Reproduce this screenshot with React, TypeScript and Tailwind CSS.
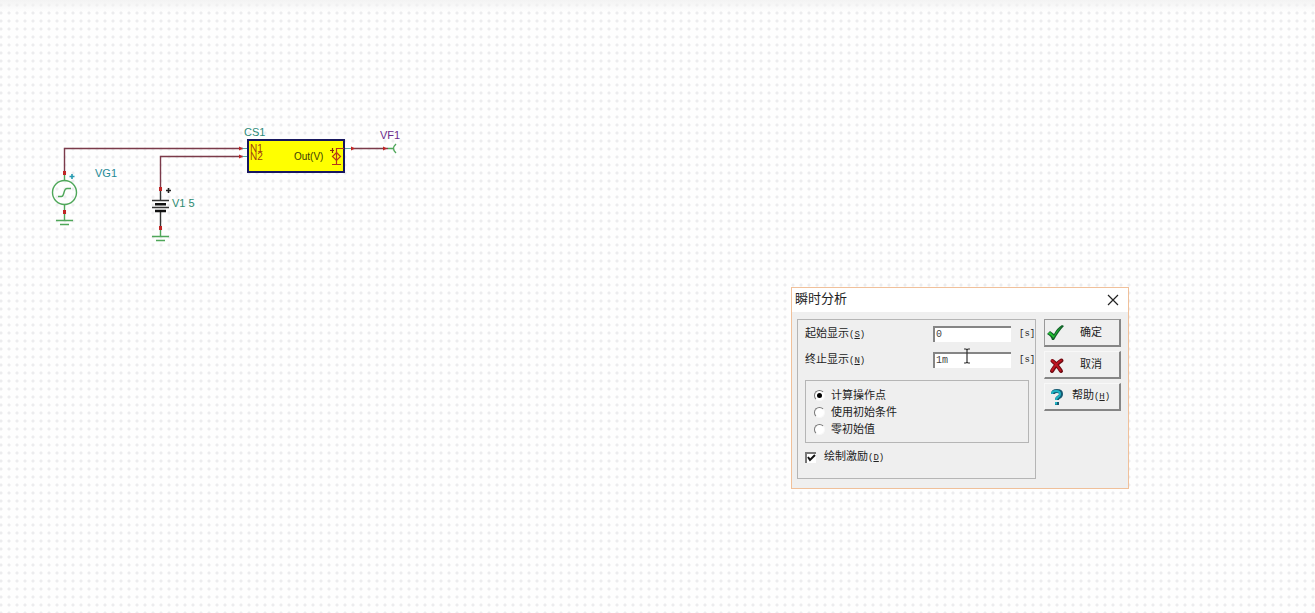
import type { ReactNode } from 'react'

const startModes = [
  { id: 'operating-point', label: '计算操作点' },
  { id: 'initial-conditions', label: '使用初始条件' },
  { id: 'zero-values', label: '零初始值' },
]

function Hotkey({ letter }: { letter: string }) {
  return (
    <span className="text-[9px]">
      (<u>{letter}</u>)
    </span>
  )
}

function Schematic() {
  return (
    <svg
      width="420"
      height="260"
      viewBox="0 0 420 260"
      fill="none"
      className="block"
      fontFamily="'Liberation Sans', Arial, sans-serif"
      fontSize="11"
    >
      {/* wires */}
      <g stroke="#7b3a4a" strokeWidth="1.4">
        <path d="M64.5 175V148.5H243" />
        <path d="M160.5 190V156.5H243" />
        <path d="M351 148.5H388" />
      </g>
      <g stroke="#5aa5a0" strokeWidth="1.2">
        <path d="M242 148.5h5M242 156.5h5M345 148.5h6" />
      </g>

      {/* VG1 source */}
      <g stroke="#4fa75a" strokeWidth="1.4">
        <path d="M64.5 173v7M64.5 205v15" />
        <circle cx="64.5" cy="192.5" r="12" />
        <path d="M58 196.500h3.500q1.500 0 2.500-4t3-4h4" />
        <path d="M56 220.500h17M60 224.500h9" />
      </g>
      <path d="M69.500 176.500h5M72 174v5" stroke="#269ab0" strokeWidth="1.6" />

      {/* V1 battery */}
      <g stroke="#333333">
        <path d="M160.500 190v11M160.500 211v16" strokeWidth="1.4" />
        <path d="M152 200.500h17M152 207.500h17" strokeWidth="1.4" />
        <path d="M155 204.200h11M155 211h11" stroke="#111111" strokeWidth="2.4" />
      </g>
      <path d="M166 190.500h5M168.500 188v5" stroke="#222222" strokeWidth="1.6" />
      <path d="M160.500 228v8M152 236.500h17M156 240.500h9" stroke="#4fa75a" strokeWidth="1.4" />

      {/* CS1 block */}
      <rect x="248" y="140" width="96" height="32" fill="#ffff00" stroke="#171760" strokeWidth="2" />
      <g stroke="#b4361a" strokeWidth="1.2">
        <path d="M344 148.500h-7.500v16M332 164.500h9" />
        <path d="M336.500 152.500l4 4l-4 4l-4-4z" />
        <path d="M330 150.500h4M332.500 148v5" stroke="#8a2a10" />
      </g>

      {/* VF1 output */}
      <path d="M388 148.500h5M396 144q-5 4.500 0 9" stroke="#4fa75a" strokeWidth="1.4" />

      {/* pins */}
      <g fill="#c02525">
        <path d="M63 171h3v4h-3zM63 210h3v4h-3z" />
        <path d="M159 187h3v4h-3zM159 226h3v4h-3z" />
        <path d="M239 146.500l4 2l-4 2zM239 154.500l4 2l-4 2z" />
        <path d="M351 146.500l4 2l-4 2zM383 146.500l4 2l-4 2z" />
      </g>

      <text x="244" y="136" fill="#2c8a78">CS1</text>
      <text x="95" y="177" fill="#1f8a96">VG1</text>
      <text x="172" y="207" fill="#2c8a70">V1 5</text>
      <text x="380" y="139" fill="#6c2a8a">VF1</text>
      <g fontSize="10">
        <text x="250" y="152" fill="#a04010">N1</text>
        <text x="250" y="160" fill="#a04010">N2</text>
        <text x="294" y="160" fill="#3c3c08">Out(V)</text>
      </g>
    </svg>
  )
}

function TimeField({ id, label, letter, value }: { id: string; label: string; letter: string; value: string }) {
  return (
    <div className="flex h-[26px] items-center">
      <label htmlFor={id} className="w-32 shrink-0">
        {label}
        <Hotkey letter={letter} />
      </label>
      <input
        id={id}
        type="text"
        defaultValue={value}
        className="h-4 w-[78px] border-t-2 border-l-2 border-[#858585] bg-white px-px text-[10px] text-[#444] outline-none"
      />
      <span className="ml-2 text-[9px]">[s]</span>
    </div>
  )
}

function DialogButton({ icon, children }: { icon: ReactNode; children: ReactNode }) {
  return (
    <button
      type="button"
      className="flex h-7 items-center border-t border-r-2 border-b-2 border-l border-t-[#f8f8f8] border-r-[#858585] border-b-[#858585] border-l-[#f8f8f8] bg-[#efefef] pr-2 pl-0.5 first:border-t-[#999] first:border-l-[#999]"
    >
      {icon}
      <span className="flex-1 pl-1.5 text-center whitespace-nowrap">{children}</span>
    </button>
  )
}

function AnalysisDialog() {
  return (
    <section
      role="dialog"
      aria-labelledby="dialog-title"
      className="absolute top-[287px] left-[791px] w-[338px] border border-[#f0c09a] bg-[#efefef] font-['Liberation_Mono','Noto_Sans_CJK_SC',monospace] text-[11px] leading-4 text-[#222]"
    >
      <header className="flex h-6 items-center justify-between bg-white pr-2 pl-[3px]">
        <h1 id="dialog-title" className="text-[13px]">瞬时分析</h1>
        <button type="button" aria-label="关闭" className="p-px">
          <svg width="12" height="12" viewBox="0 0 12 12" stroke="#222222" strokeWidth="1.2">
            <path d="M1 1l10 10M11 1L1 11" />
          </svg>
        </button>
      </header>

      <div className="flex gap-2 pt-[7px] pr-[7px] pb-[9px] pl-[5px]">
        <div className="w-[239px] border border-[#b5b5b5] pt-px pr-1.5 pb-3 pl-[7px]">
          <TimeField id="start" label="起始显示" letter="S" value="0" />
          <TimeField id="end" label="终止显示" letter="N" value="1m" />

          <div role="radiogroup" className="mt-[7px] border border-[#b5b5b5] px-2 pt-[6px] pb-1">
            {startModes.map((mode, i) => (
              <div key={mode.id} className="flex h-[17px] items-center gap-1.5">
                <input
                  id={mode.id}
                  type="radio"
                  name="start-mode"
                  defaultChecked={i === 0}
                  className="grid size-[11px] appearance-none place-items-center rounded-full border border-t-[#777] border-r-[#f8f8f8] border-b-[#f8f8f8] border-l-[#777] bg-white checked:before:size-[5px] checked:before:rounded-full checked:before:bg-black"
                />
                <label htmlFor={mode.id}>{mode.label}</label>
              </div>
            ))}
          </div>

          <div className="mt-1.5 flex items-center gap-2">
            <span className="relative flex">
              <input
                id="draw-excitation"
                type="checkbox"
                defaultChecked
                className="peer size-[11px] appearance-none border-t-2 border-l-2 border-[#777] bg-white"
              />
              <svg
                viewBox="0 0 11 11"
                fill="none"
                stroke="#111111"
                strokeWidth="2"
                className="pointer-events-none absolute inset-0 hidden size-[11px] peer-checked:block"
              >
                <path d="M3 5l2 3l5-5" />
              </svg>
            </span>
            <label htmlFor="draw-excitation">
              绘制激励
              <Hotkey letter="D" />
            </label>
          </div>
        </div>

        <div className="flex flex-1 flex-col gap-1">
          <DialogButton
            icon={
              <svg width="18" height="18" viewBox="0 0 18 18">
                <path d="M0 10l3-3l4 3q3-6 8-9l2 1q-5 5-10 14H5q-1-4-5-6z" fill="#12602a" />
                <path d="M1 9.500l2-1.500l4 4q3-6 8-10q-5 6-8.500 12q-2-3-5.500-4.500z" fill="#22c832" />
              </svg>
            }
          >
            确定
          </DialogButton>
          <DialogButton
            icon={
              <svg width="18" height="18" viewBox="0 0 18 18" fill="none" strokeLinecap="round">
                <path d="M5.500 5q4 3 8.500 10M14.500 4.500Q9 8 5 15" stroke="#6d0a12" strokeWidth="4" />
                <path d="M5 4.500q4 3 8.500 10M14 4.500Q8.500 8 5 14.500" stroke="#c01420" strokeWidth="2" />
              </svg>
            }
          >
            取消
          </DialogButton>
          <DialogButton
            icon={
              <svg width="18" height="18" viewBox="0 0 18 18" fill="none">
                <path d="M6 6q0-3 4-3t4 3q0 2-2 3t-2 3M10 14v3" stroke="#155a72" strokeWidth="4" />
                <path d="M5 6q0-3 4-3t4 3q0 2-2 3t-2 3M9 14v2.500" stroke="#20b5c5" strokeWidth="2" />
              </svg>
            }
          >
            帮助
            <Hotkey letter="H" />
          </DialogButton>
        </div>
      </div>

      {/* text cursor over the end time */}
      <svg
        width="8"
        height="16"
        viewBox="0 0 8 16"
        fill="none"
        stroke="#333333"
        strokeWidth="1.2"
        className="pointer-events-none absolute top-[60px] left-[171px]"
      >
        <path d="M1 1h2l1 1l1-1h2M4 2v12M1 15h2l1-1l1 1h2" />
      </svg>
    </section>
  )
}

export default function App() {
  return (
    <main className="relative min-h-screen overflow-hidden bg-[#fefefe] bg-[radial-gradient(circle_at_center,#ececee_1px,transparent_2px)] bg-size-[8px_8px] bg-position-[5px_1px]">
      <div className="absolute inset-x-0 top-0 h-3 bg-linear-to-b from-[#f3f3f3] to-transparent" />
      <Schematic />
      <AnalysisDialog />
    </main>
  )
}
